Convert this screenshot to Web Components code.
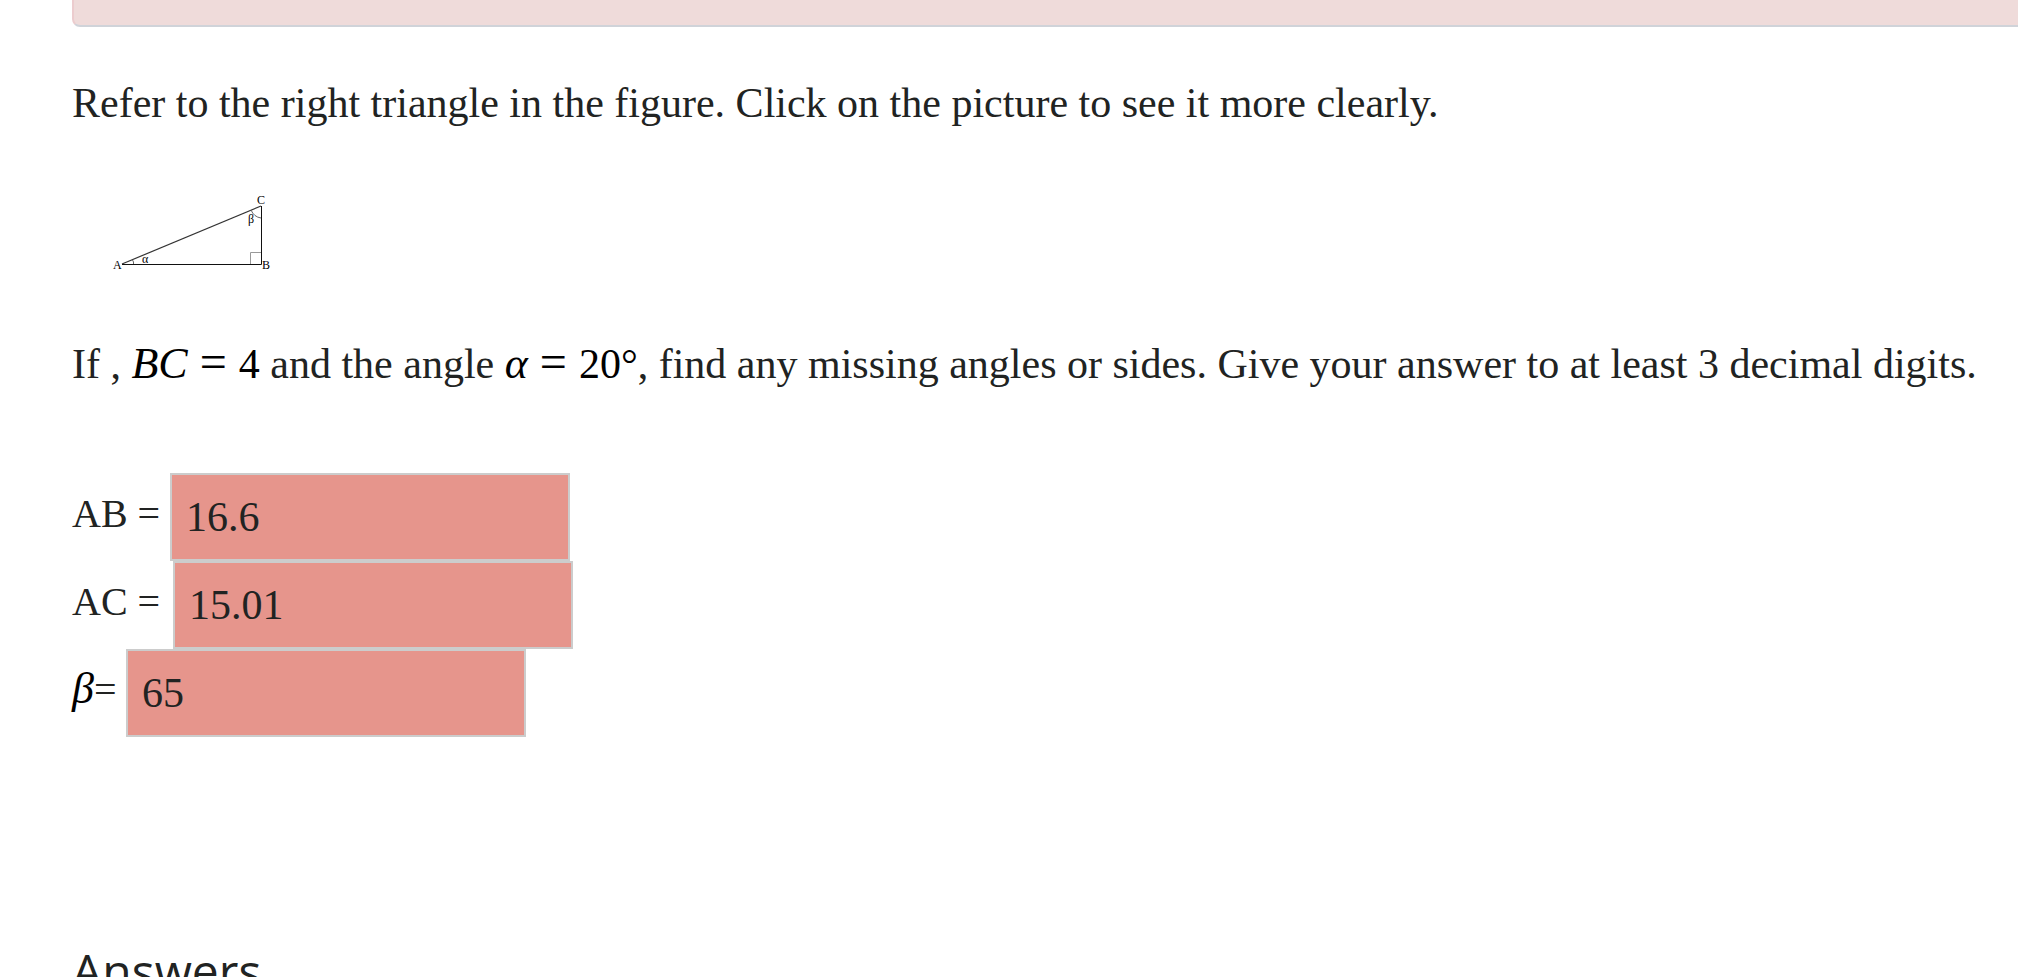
<!DOCTYPE html>
<html lang="en">
<head>
<meta charset="utf-8">
<title>Right triangle exercise</title>
<style>
  html, body { height: 100%; }
  body { margin: 0; overflow: hidden; background: #fff; color: #212322; font-family: "Liberation Serif", serif; font-size: 42px; line-height: 60px; }
</style>
</head>
<body>
<exercise-page>
  <result-banner slot="banner"></result-banner>
  <prompt-text>Refer to the right triangle in the figure. Click on the picture to see it more clearly.</prompt-text>
  <triangle-figure></triangle-figure>
  <prompt-text>If , <math-text><i>BC</i><b>=</b>4</math-text> and the angle <math-text><i>α</i><b>=</b>20°</math-text>, find any missing angles or sides. Give your answer to at least 3 decimal digits.</prompt-text>
  <answer-list>
    <answer-field name="ab" label="AB =" value="16.6" style="--label-width: 98px"></answer-field>
    <answer-field name="ac" label="AC =" value="15.01" style="--label-width: 101px"></answer-field>
    <answer-field name="beta" symbol="β" label="=" value="65" style="--label-width: 54px"></answer-field>
  </answer-list>
  <section-title>Answers</section-title>
</exercise-page>

<script>
const define = (name, html, setup) => {
  const template = document.createElement('template');
  template.innerHTML = html;
  customElements.define(name, class extends HTMLElement {
    constructor() {
      super();
      this.attachShadow({ mode: 'open' }).append(template.content.cloneNode(true));
    }
    connectedCallback() { if (setup) setup(this, this.shadowRoot); }
  });
};

define('exercise-page', `
  <style>
    :host { display: block; padding-left: 72px; }
    main { display: flex; flex-direction: column; }
  </style>
  <slot name="banner"></slot>
  <main><slot></slot></main>`);

define('result-banner', `
  <style>
    :host { display: block; box-sizing: border-box; height: 27px; margin-bottom: 46px;
      background: #efdbda; border-left: 2px solid #ecccce; border-bottom: 2px solid #d0d3d9;
      border-bottom-left-radius: 8px; }
  </style>`);

define('prompt-text', `
  <style>:host { display: block; } p { margin: 0; }</style>
  <p><slot></slot></p>`);

define('math-text', `
  <style>
    :host { display: inline; color: #000; font-size: 42px; line-height: 1; }
    ::slotted(i) { font-size: 44px; }
    ::slotted(b) { font-weight: normal; font-size: 48px; margin: 0 12px; }
  </style>
  <slot></slot>`);

define('triangle-figure', `
  <style>
    :host { display: block; padding: 51px 0 56px 32px; }
    button { display: block; padding: 0; border: 0; background: none; cursor: zoom-in; }
    svg { display: block; }
    text { font: 12px "Liberation Serif", serif; fill: #000; }
  </style>
  <button type="button" aria-label="Enlarge the triangle picture">
    <svg width="176" height="94" viewBox="104 184 176 94" fill="none">
      <path d="M122 264 261 206" stroke="#333" stroke-width="1.2"/>
      <path d="M122 264.5H261.5V206" stroke="#111"/>
      <path d="M250.5 264V252.5H261" stroke="#999"/>
      <path d="M132.5 260Q134 262 133.5 264M251 210Q254 217 261 218" stroke="#666"/>
      <text x="113" y="269">A</text>
      <text x="262" y="269">B</text>
      <text x="257" y="204">C</text>
      <text x="142" y="263">α</text>
      <text x="248" y="223">β</text>
    </svg>
  </button>`);

define('answer-list', `
  <style>:host { display: flex; flex-direction: column; margin-top: 79px; }</style>
  <slot></slot>`);

define('answer-field', `
  <style>
    :host { display: flex; align-items: center; }
    label { flex: none; width: var(--label-width); padding-bottom: 6px; font-size: 40px; white-space: nowrap; }
    i { color: #000; font-size: 44px; line-height: 1; }
    input { box-sizing: border-box; width: 400px; height: 88px; margin: 0; padding: 0 14px;
      border: 2px solid #ccc; border-radius: 0; background: #e6958c; color: inherit; font: inherit; font-size: 42px; outline: 0; }
  </style>
  <label for="answer"><i></i><span></span></label><input id="answer" type="text">`,
  (host, root) => {
    const symbol = root.querySelector('i');
    if (host.hasAttribute('symbol')) symbol.textContent = host.getAttribute('symbol');
    else symbol.remove();
    root.querySelector('span').textContent = host.getAttribute('label');
    const input = root.querySelector('input');
    input.name = host.getAttribute('name');
    input.value = host.getAttribute('value');
  });

define('section-title', `
  <style>
    :host { display: block; margin-top: 202px; }
    h2 { margin: 0; font: 400 48px/64px "Open Sans", sans-serif; }
  </style>
  <h2><slot></slot></h2>`);
</script>
</body>
</html>
